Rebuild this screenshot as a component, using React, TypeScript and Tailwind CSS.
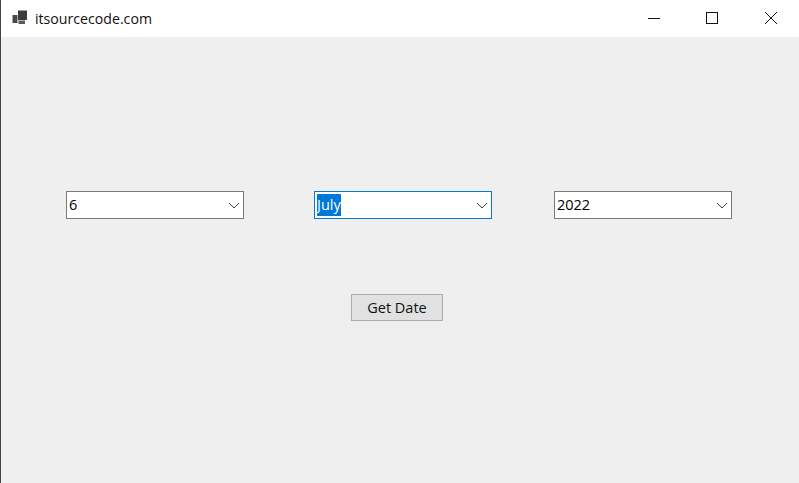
const font = "font-['Open_Sans','Noto_Sans',sans-serif]";

function Chevron() {
  return (
    <svg width="12" height="7" viewBox="0 0 12 7" className="shrink-0">
      <path d="M1 1 L6 6 L11 1" fill="none" stroke="#3f3f3f" strokeWidth="1" />
    </svg>
  );
}

function Combo({ value, active, className }: { value: string; active?: boolean; className?: string }) {
  return (
    <div
      className={`flex h-[28px] w-[178px] items-center border bg-white pl-[2px] ${
        active ? 'border-[#0078d7]' : 'border-[#7a7a7a]'
      } ${className ?? ''}`}
    >
      {active ? (
        <span className="h-[22px] bg-[#0078d7] text-[14.5px] leading-[22px] text-white">{value}</span>
      ) : (
        <span className="text-[14.5px] leading-[22px] text-[#000]">{value}</span>
      )}
      <div className="ml-auto flex w-[18px] justify-center">
        <Chevron />
      </div>
    </div>
  );
}

export default function App() {
  return (
    <div className={`flex h-[483px] w-[799px] flex-col overflow-hidden bg-[#efefef] ${font}`}>
      {/* Title bar */}
      <div className="flex h-[37px] shrink-0 items-center border-l border-l-[#444] bg-white pl-[11px]">
        <svg width="16" height="16" viewBox="0 0 16 16" className="mb-[1px] shrink-0">
          <rect x="0.5" y="5" width="5" height="8" fill="#4a4a4a" />
          <rect x="6" y="0.5" width="9" height="9.5" fill="#3c3c3c" />
          <rect x="6.5" y="10.5" width="6.5" height="3.5" fill="#5a5a5a" />
        </svg>
        <span className="ml-[7px] text-[14.15px] text-[#111]">itsourcecode.com</span>
        <div className="ml-auto flex h-full">
          <div className="flex w-[58px] items-center justify-center">
            <svg width="14" height="14" viewBox="0 0 14 14" className="mr-[4px] mb-[2px]">
              <path d="M1 7.5 H13" stroke="#111" strokeWidth="1" />
            </svg>
          </div>
          <div className="flex w-[58px] items-center justify-center">
            <svg width="14" height="14" viewBox="0 0 14 14" className="mr-[4px] mb-[2px]">
              <rect x="1.5" y="1.5" width="11" height="11" fill="none" stroke="#111" strokeWidth="1" />
            </svg>
          </div>
          <div className="flex w-[56px] items-center justify-center">
            <svg width="14" height="14" viewBox="0 0 14 14" className="mb-[2px]">
              <path d="M1 1 L13 13 M13 1 L1 13" stroke="#111" strokeWidth="1" />
            </svg>
          </div>
        </div>
      </div>

      {/* Form */}
      <div className="flex flex-1 flex-col border-l border-l-[#444] pl-[65px] pt-[154px]">
        <div className="flex">
          <Combo value="6" />
          <Combo value="July" active className="ml-[70px]" />
          <Combo value="2022" className="ml-[62px]" />
        </div>
        <button className="ml-[285px] mt-[75px] h-[27px] w-[92px] border border-[#adadad] bg-[#e1e1e1] text-[14.5px] text-[#111]">
          Get Date
        </button>
      </div>
    </div>
  );
}
